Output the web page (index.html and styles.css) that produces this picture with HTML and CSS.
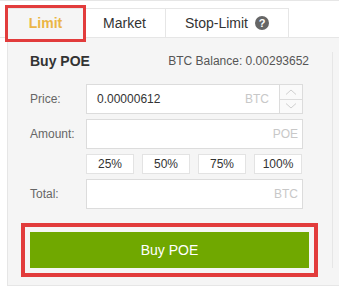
FILE: index.html
```html
<!DOCTYPE html>
<html>
<head lang="en">
    <meta charset="UTF-8">
    <title>Buy POE</title>
    <link rel="stylesheet" href="styles.css">
</head>
<body>
<div class="trade">
    <div class="tabs">
        <div class="tab tab-limit active">Limit<span class="mark"></span></div>
        <div class="tab tab-market">Market</div>
        <div class="tab tab-stop">Stop-Limit<span class="help">?</span></div>
    </div>
    <div class="panel">
        <div class="form">
            <div class="head">
                <span class="title">Buy POE</span>
                <span class="balance">BTC Balance: 0.00293652</span>
            </div>
            <div class="row">
                <label>Price:</label>
                <div class="field price">
                    <div class="box"><span class="val">0.00000612</span><span class="unit">BTC</span></div>
                    <div class="spin">
                        <span><svg width="12" height="6" viewBox="0 0 12 6"><polyline points="1,5.5 6,1 11,5.5" fill="none" stroke="#cfcfcf" stroke-width="1"/></svg></span>
                        <span><svg width="12" height="6" viewBox="0 0 12 6"><polyline points="1,0.5 6,5 11,0.5" fill="none" stroke="#cfcfcf" stroke-width="1"/></svg></span>
                    </div>
                </div>
            </div>
            <div class="row">
                <label>Amount:</label>
                <div class="field">
                    <div class="box"><span class="val"></span><span class="unit">POE</span></div>
                </div>
            </div>
            <div class="pcts">
                <span>25%</span>
                <span>50%</span>
                <span>75%</span>
                <span>100%</span>
            </div>
            <div class="row last">
                <label>Total:</label>
                <div class="field">
                    <div class="box"><span class="val"></span><span class="unit">BTC</span></div>
                </div>
            </div>
            <button class="buy">Buy POE</button>
        </div>
    </div>
</div>
</body>
</html>
```

FILE: styles.css
```css
body{
    margin: 0;
    background: #fff;
    font-family: "Liberation Sans", Arial, sans-serif;
}
.trade{
    border-top: 1px solid #e6e6e6;
}
.tabs{
    display: flex;
    padding: 7px 0 0 7px;
    border-bottom: 1px solid #e6e6e6;
}
.tab{
    height: 28px;
    line-height: 28px;
    border: 1px solid #e6e6e6;
    border-bottom: 0;
    border-right: 0;
    background: #fff;
    color: #333;
    font-size: 14px;
    text-align: center;
}
.tab-limit{
    width: 75px;
}
.tab-market{
    width: 81px;
}
.tab-stop{
    width: 122px;
    border-right: 1px solid #e6e6e6;
    display: flex;
    align-items: center;
    justify-content: center;
}
.tab.active{
    position: relative;
    height: 29px;
    margin-bottom: -1px;
    background: #f5f5f5;
    color: #ebb546;
    font-weight: bold;
}
.mark{
    position: absolute;
    left: -3px;
    top: -4px;
    right: -3px;
    bottom: -4px;
    border: 3px solid #e23c3c;
}
.help{
    display: inline-block;
    width: 14px;
    height: 14px;
    margin-left: 7px;
    border-radius: 50%;
    background: #666;
    color: #fff;
    font-size: 11px;
    font-weight: bold;
    line-height: 14px;
    text-align: center;
}
.panel{
    margin-left: 7px;
    padding: 14px 0 17px;
    border-left: 1px solid #e6e6e6;
    border-bottom: 1px solid #e6e6e6;
    background: #f5f5f5;
}
.form{
    width: 279px;
    padding: 0 23px 0 22px;
    border-right: 1px solid #e6e6e6;
}
.head{
    display: flex;
    justify-content: space-between;
    align-items: center;
    height: 18px;
    margin-bottom: 14px;
}
.title{
    font-size: 14px;
    font-weight: bold;
    color: #333;
}
.balance{
    font-size: 12px;
    color: #555;
}
.row{
    display: flex;
    align-items: center;
    margin-bottom: 5px;
}
.row.last{
    margin-bottom: 0;
}
.row label{
    width: 56px;
    font-size: 12px;
    color: #666;
}
.field{
    display: flex;
    width: 217px;
    height: 30px;
}
.box{
    flex: 1;
    display: flex;
    align-items: center;
    justify-content: space-between;
    padding: 0 4px 0 10px;
    border: 1px solid #dcdcdc;
    background: #fff;
    font-size: 12px;
    color: #333;
}
.price .box{
    padding-right: 10px;
}
.unit{
    color: #c8c8c8;
}
.spin{
    display: flex;
    flex-direction: column;
    width: 24px;
    margin-left: -1px;
}
.spin span{
    flex: 1;
    display: flex;
    align-items: center;
    justify-content: center;
    border: 1px solid #dcdcdc;
    background: #fafafa;
}
.spin span + span{
    border-top: 0;
}
.pcts{
    display: flex;
    gap: 8px;
    margin: 0 0 5px 56px;
}
.pcts span{
    width: 48px;
    height: 20px;
    box-sizing: border-box;
    border: 1px solid #e3e3e3;
    background: #fff;
    font-size: 12px;
    line-height: 18px;
    color: #333;
    text-align: center;
}
.buy{
    display: block;
    width: 279px;
    height: 36px;
    margin-top: 23px;
    padding: 0;
    border: 0;
    background: #70a800;
    color: #fff;
    font-family: "Liberation Sans", Arial, sans-serif;
    font-size: 14px;
    outline: 4px solid #e23c3c;
    outline-offset: 5px;
}
```
